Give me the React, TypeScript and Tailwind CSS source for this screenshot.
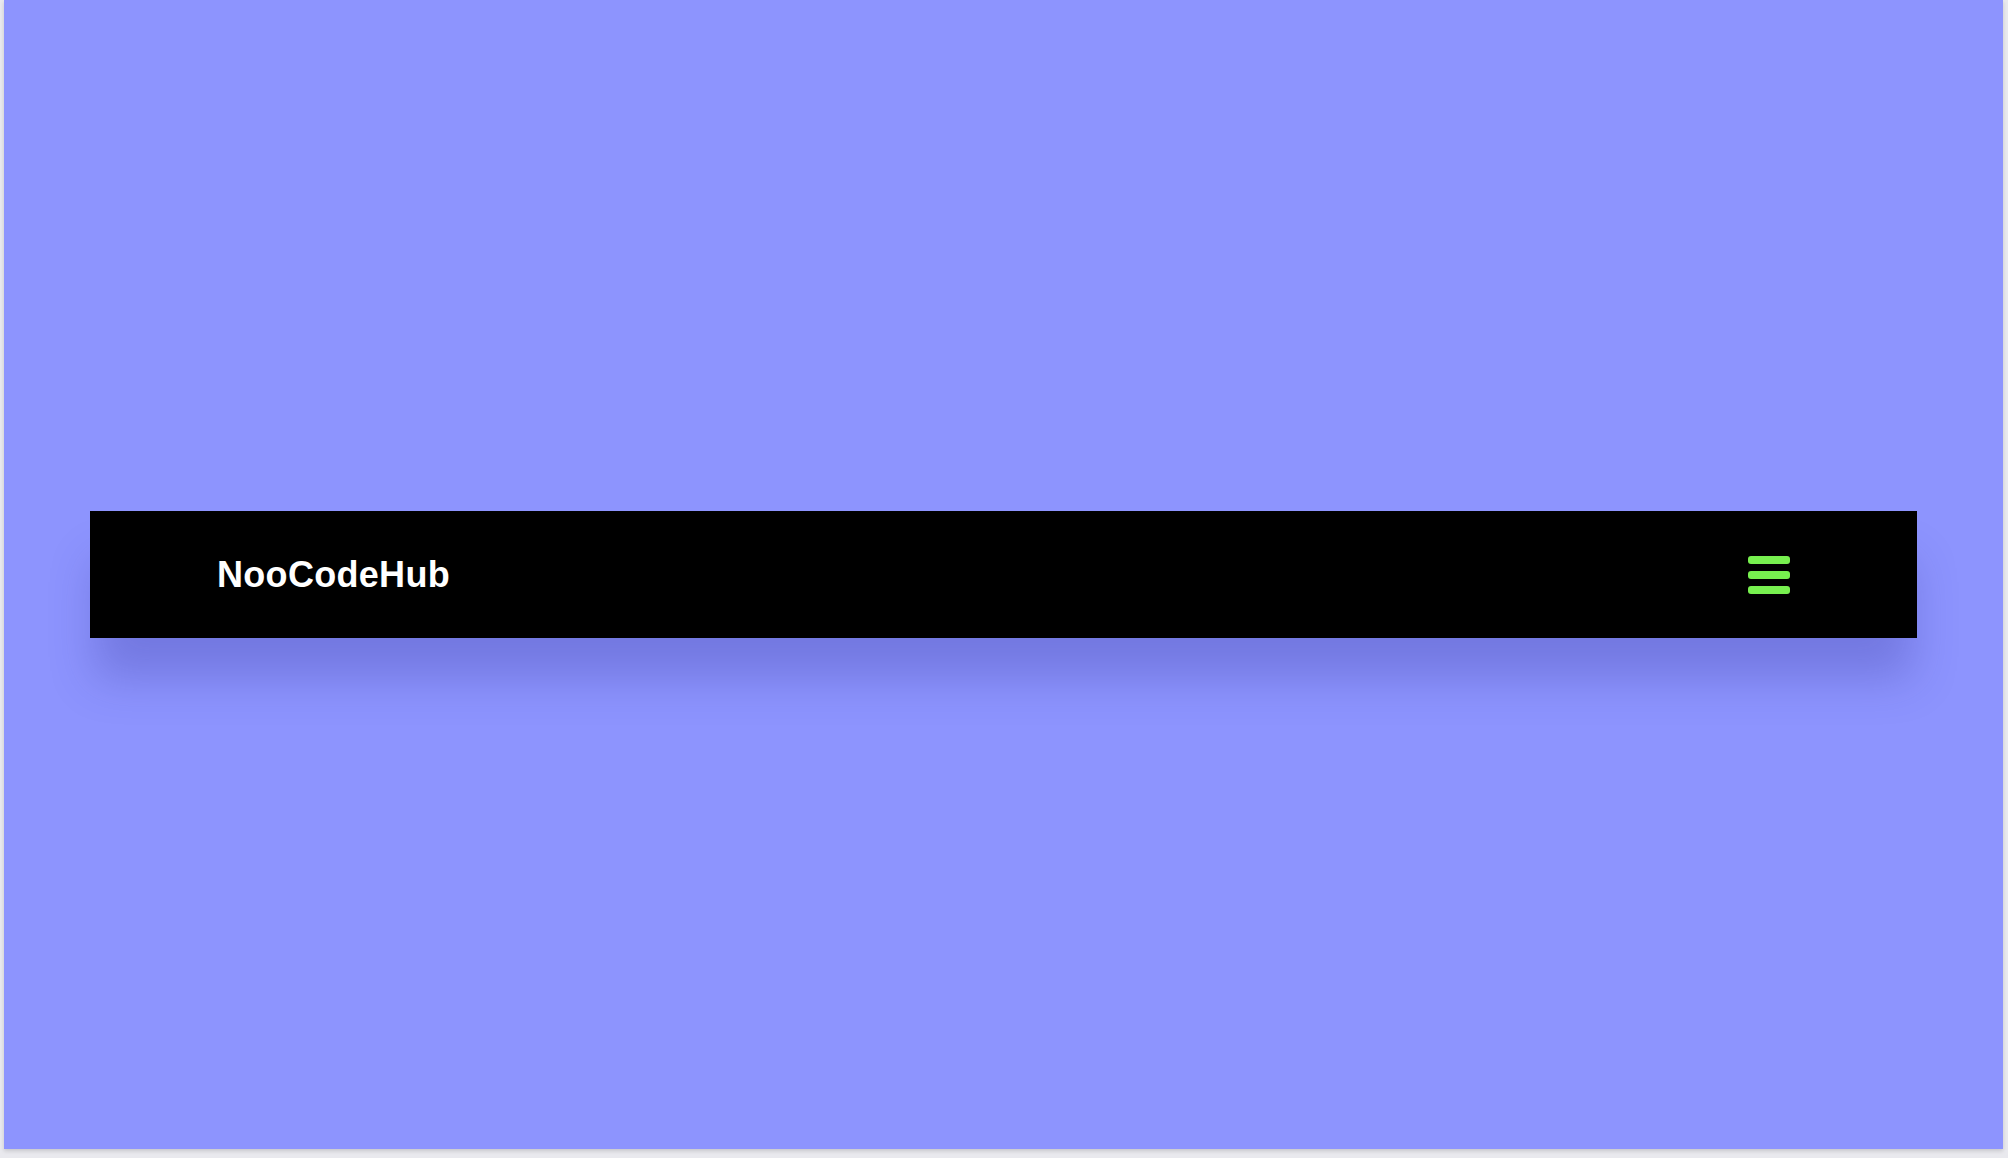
export default function App() {
  return (
    <div className="w-[2008px] h-[1158px] bg-[#e9e9ee] overflow-hidden">
      <div className="ml-[4px] w-[1999px] h-[1149px] bg-[#8d94fe] flex items-center justify-center shadow-[0_2px_4px_rgba(0,0,0,0.15)]">
        {/* Navbar */}
        <nav className="w-[1827px] h-[127px] bg-black flex items-center justify-between px-[127px] shadow-[0_45px_45px_-5px_rgba(40,40,140,0.25)]">
          <span className="text-white font-bold text-[36px] leading-none tracking-[0.3px] font-['Liberation_Sans',Arial,sans-serif]">
            NooCodeHub
          </span>
          <button className="w-[42px] h-[38px] flex flex-col justify-center gap-[7px]" aria-label="Menu">
            <span className="block h-[8px] w-full rounded-[3px] bg-[#77f04f]" />
            <span className="block h-[8px] w-full rounded-[3px] bg-[#77f04f]" />
            <span className="block h-[8px] w-full rounded-[3px] bg-[#77f04f]" />
          </button>
        </nav>
      </div>
    </div>
  );
}
